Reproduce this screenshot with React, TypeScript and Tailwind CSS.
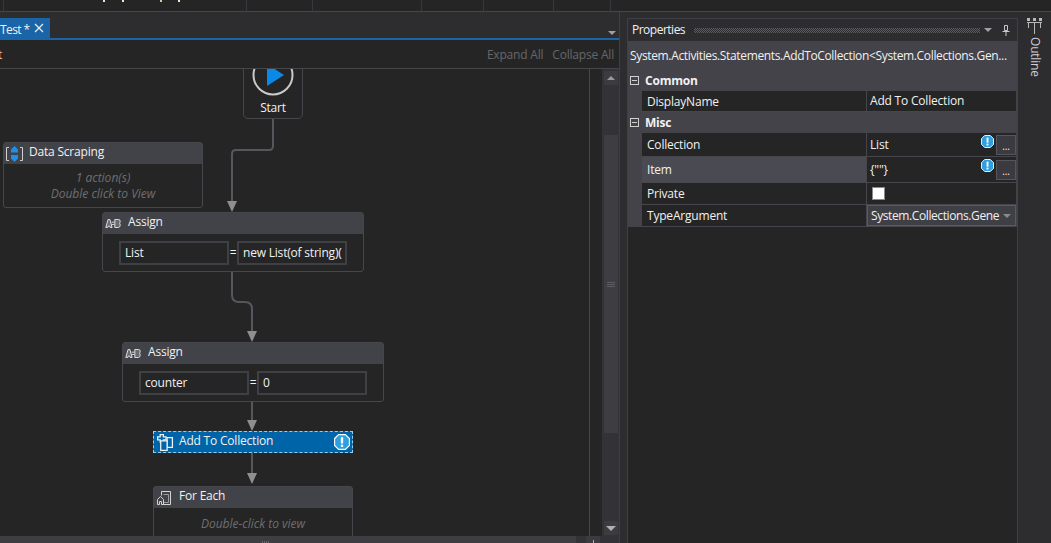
const FONT = "font-['Open_Sans','Noto_Sans',sans-serif] tracking-[-0.2px]";

function Arrow({ x, y }: { x: number; y: number }) {
  return (
    <svg className="absolute" style={{ left: x - 6, top: y }} width="12" height="11" viewBox="0 0 12 11">
      <path d="M1 0h10L6 11z" fill="#8f8f8f" />
    </svg>
  );
}

function Line({ d }: { d: string }) {
  return <path d={d} fill="none" stroke="#56565c" strokeWidth="2" />;
}

function AssignIcon() {
  return (
    <svg width="16" height="9" viewBox="0 0 17 10" fill="#6a6a70" stroke="#e0e0e0" strokeWidth="1.100">
      <path d="M.5 9.500 3 .5h2L7.500 9.500h-2L5 8H3L2.500 9.500z" />
      <path d="M7 3.500h3M7 6h3" fill="none" />
      <path d="M10.500 .5h4q2 0 2 2 0 1.500-1 2 1 .5 1 2.500t-2 2.500h-4z" />
    </svg>
  );
}

function Info({ size = 14 }: { size?: number }) {
  return (
    <svg width={size} height={size} viewBox="0 0 14 14">
      <path d="M4 .5h6L13.500 4v6L10 13.500H4L.5 10V4z" fill="#2f9fe0" stroke="#fff" />
      <rect x="6" y="2.800" width="2" height="5.500" fill="#fff" />
      <rect x="6" y="9.300" width="2" height="2" fill="#fff" />
    </svg>
  );
}

function Node({
  x, y, w, title, icon, children,
}: { x: number; y: number; w: number; title: string; icon: React.ReactNode; children: React.ReactNode }) {
  return (
    <div className="absolute border border-[#46464c] rounded-[3px] bg-[#252526]" style={{ left: x, top: y, width: w }}>
      <div className="h-[21px] bg-[#424249] flex items-center text-[12px] text-[#f1f1f1]">
        <div className="w-[25px] pl-[2px] flex justify-start">{icon}</div>
        <span className="pb-[3px]">{title}</span>
      </div>
      {children}
    </div>
  );
}

function Field({ text }: { text: string }) {
  return (
    <div className="w-[110px] h-[24px] border-2 border-[#3f3f46] flex items-center pl-1 text-[12px] text-[#f1f1f1] overflow-hidden whitespace-nowrap">
      {text}
    </div>
  );
}

function AssignBody({ left, right }: { left: string; right: string }) {
  return (
    <div className="h-[37px] flex items-center pl-[16px] pt-[1px] text-[12px] text-[#f1f1f1]">
      <Field text={left} />
      <span className="w-[8px] text-center">=</span>
      <Field text={right} />
    </div>
  );
}

function Canvas() {
  return (
    <div className="relative flex-1 min-h-0 overflow-hidden bg-[#252526]">
      <svg className="absolute left-0 top-0" width="589" height="467">
        <Line d="M273 49V77Q273 81 269 81H236Q232 81 232 85V133" />
        <Line d="M232 203V226Q232 233 239 233H245Q252 233 252 240V263" />
        <Line d="M252 333V352" />
        <Line d="M252 384V405" />
      </svg>
      <div className="absolute left-[589px] top-0 bottom-0 w-px bg-[#46464c]" />
      <div className="absolute left-[243px] top-[-20px] w-[60px] h-[70px] border border-[#46464c] rounded-[5px] flex flex-col items-center">
        <svg className="mt-[4px]" width="42" height="42" viewBox="0 0 42 42">
          <circle cx="21" cy="21" r="19.500" fill="none" stroke="#c9c9c9" strokeWidth="2" />
          <path d="M15 10 32 21 15 32z" fill="#0a8ae8" />
        </svg>
        <span className="text-[12px] leading-[16px] text-[#f1f1f1] mt-[4px]">Start</span>
      </div>

      <Node x={3} y={73} w={200} title="Data Scraping" icon={
        <svg width="17" height="16" viewBox="0 0 17 16">
          <path d="M3 1.500H.5V14.500H3M14 1.500H16.500V14.500H14" fill="none" stroke="#cfcfcf" />
          <path d="M5 3.500 8.500 0 12 3.500V6.500H5z" fill="#1e90e8" />
          <path d="M5 9h7v3.500L8.500 16 5 12.500z" fill="#1e90e8" />
        </svg>
      }>
        <div className="h-[43px] flex flex-col items-center justify-center text-[12px] leading-[16px] italic tracking-[0px] text-[#6f6f6f]">
          <span>1 action(s)</span>
          <span>Double click to View</span>
        </div>
      </Node>
      <Arrow x={232} y={132} />
      <Node x={102} y={143} w={262} title="Assign" icon={<AssignIcon />}>
        <AssignBody left="List" right="new List(of string)(" />
      </Node>
      <Arrow x={252} y={262} />
      <Node x={122} y={273} w={262} title="Assign" icon={<AssignIcon />}>
        <AssignBody left="counter" right="0" />
      </Node>
      <Arrow x={252} y={351} />
      <div className="absolute left-[153px] top-[362px] w-[200px] h-[22px] bg-[#0065a8] border border-dashed border-[#9ccbe8] flex items-center text-[12px] text-[#f1f1f1]">
        <div className="w-[25px] pl-[3px] flex justify-start">
          <svg width="17" height="17" viewBox="0 0 16 16" fill="#0065a8" stroke="#f0f0f0" strokeWidth="1.200">
            <path d="M9.500 3.500h5v9h-5z" />
            <path d="M3 .6h3v2h2.500v3H6v2H3v-2H.6v-3H3z" />
            <path d="M3.500 6.500h6v9h-6z" />
          </svg>
        </div>
        <span className="pb-[2px]">Add To Collection</span>
        <div className="ml-auto mr-[2px] flex"><Info size={16} /></div>
      </div>
      <Arrow x={252} y={404} />
      <Node x={153} y={417} w={200} title="For Each" icon={
        <svg width="16" height="16" viewBox="0 0 16 16" fill="none" stroke="#d4d4d4">
          <path d="M5.500 5.500v-4h9v13h-9" />
          <path d="M7.500 4.500h5v8h-5" stroke="#9a9a9a" />
          <path d="M3.500 14.500h-2v-5l3-3 3 3v5h-2v-3h-2z" fill="#424249" />
        </svg>
      }>
        <div className="h-[40px] flex items-center justify-center text-[12px] italic tracking-[0px] text-[#6f6f6f] pb-[9px]">Double-click to view</div>
      </Node>
    </div>
  );
}

function ScrollV() {
  return (
    <div className="w-[17px] bg-[#333337] flex flex-col items-center">
      <div className="mt-[2px] w-[14px] h-[14px] bg-[#3c3c40] flex items-center justify-center">
        <div className="w-0 h-0 border-x-[4px] border-x-transparent border-b-[4px] border-b-[#9a9a9a]" />
      </div>
      <div className="w-[14px] mt-[50px] h-[298px] bg-[#3e3e42] flex flex-col items-center justify-center gap-px">
        <div className="w-[8px] h-px bg-[#5c5c62]" />
        <div className="w-[8px] h-px bg-[#5c5c62]" />
        <div className="w-[8px] h-px bg-[#5c5c62]" />
      </div>
      <div className="mt-[88px] w-[14px] h-[14px] bg-[#3c3c40] flex items-center justify-center">
        <div className="w-0 h-0 border-x-[5px] border-x-transparent border-t-[5px] border-t-[#b0b0b0]" />
      </div>
    </div>
  );
}

function HBar() {
  return (
    <div className="h-[7px] shrink-0 bg-[#333337] flex">
      <div className="w-[576px] bg-[#3e3e42] flex justify-center">
        <div className="mt-[5px] ml-[-46px] flex gap-px">
          <div className="w-px h-[2px] bg-[#66666c]" />
          <div className="w-px h-[2px] bg-[#66666c]" />
          <div className="w-px h-[2px] bg-[#66666c]" />
          <div className="w-px h-[2px] bg-[#66666c]" />
        </div>
      </div>
      <div className="ml-[10px] w-[14px] bg-[#3c3c40] flex justify-center">
        <div className="w-px h-[3px] mt-[4px] bg-[#b0b0b0]" />
      </div>
    </div>
  );
}

function Row({ label, h, highlight, children }: { label: string; h: string; highlight?: boolean; children?: React.ReactNode }) {
  return (
    <div className={`flex ${h} ml-[14px] mr-[1px] text-[12px] border-b border-[#46464c]`}>
      <div className={`w-[224px] flex items-center pl-[5px] pt-[1px] text-[#f1f1f1] ${highlight ? "bg-[#4a4a52]" : "bg-[#252526]"}`}>{label}</div>
      <div className="w-[1px] bg-[#46464c]" />
      <div className="flex-1 bg-[#252526] flex items-center text-[#f1f1f1]">{children}</div>
    </div>
  );
}

function Section({ title }: { title: string }) {
  return (
    <div className="h-[21px] flex items-center text-[12px] font-bold text-[#f1f1f1]">
      <div className="ml-[2px] w-[9px] h-[9px] border border-[#d0d0d0] flex items-center justify-center">
        <div className="w-[5px] h-px bg-[#d0d0d0]" />
      </div>
      <span className="ml-[6px]">{title}</span>
    </div>
  );
}

function ExprCell({ text }: { text: string }) {
  return (
    <div className="flex-1 flex items-center h-full bg-[#252526]">
      <div className="w-[111px] pl-[3px] pt-[1px]">{text}</div>
      <div className="w-[18px] h-full flex justify-center pt-[2px]"><Info size={13} /></div>
      <div className="ml-auto w-[20px] h-[20px] bg-[#3a3a40] border border-[#55555b] text-center leading-[20px] text-[10px]">...</div>
    </div>
  );
}

function Properties() {
  return (
    <div className="w-[391px] h-full flex flex-col border border-[#3f3f46] border-b-0 bg-[#252526]">
      <div className="h-[22px] flex items-center bg-[#2d2d30] text-[12px] text-[#f1f1f1] shrink-0">
        <span className="ml-[4px] w-[62px] tracking-[-0.5px]">Properties</span>
        <div className="w-[286px] h-[5px] bg-[repeating-conic-gradient(#5c5c62_0_25%,transparent_0_50%)] bg-[length:2px_2px]" />
        <div className="ml-auto mr-[7px] flex items-center gap-[10px]">
          <div className="w-0 h-0 border-x-[4px] border-x-transparent border-t-[4px] border-t-[#a0a0a0]" />
          <svg width="8" height="11" viewBox="0 0 8 11" fill="none" stroke="#c8c8c8">
            <path d="M2.500 .5h3v5h-3zM.5 6.500h7M4 7v4" />
          </svg>
        </div>
      </div>
      <div className="flex-none bg-[#434349]">
        <div className="h-[29px] flex items-center pl-[2px] text-[12px] tracking-[-0.35px] text-[#f1f1f1] whitespace-nowrap">System.Activities.Statements.AddToCollection&lt;System.Collections.Gen...</div>
        <Section title="Common" />
        <Row label="DisplayName" h="h-[21px]"><span className="pl-[3px]">Add To Collection</span></Row>
        <Section title="Misc" />
        <Row label="Collection" h="h-[24px]"><ExprCell text="List" /></Row>
        <Row label="Item" h="h-[26px]" highlight><ExprCell text={'{""}'} /></Row>
        <Row label="Private" h="h-[22px]">
          <div className="ml-[5px] w-[13px] h-[13px] bg-white border border-[#8a8a8a]" />
        </Row>
        <Row label="TypeArgument" h="h-[22px]">
          <div className="w-full h-full border border-[#5a5a60] bg-[#3f3f46] flex items-center pl-[3px] pt-[1px] tracking-[-0.4px] whitespace-nowrap">
            <span>System.Collections.Gene</span>
            <div className="ml-auto mr-[4px] w-0 h-0 border-x-[4px] border-x-transparent border-t-[4px] border-t-[#8a8a8a]" />
          </div>
        </Row>
      </div>
      <div className="flex-1" />
    </div>
  );
}

function TopBar() {
  const Sep = ({ w }: { w: string }) => <div className={`${w} h-[11px] border-r border-[#38383c]`} />;
  const Dot = ({ c, ml }: { c: string; ml: string }) => <div className={`${ml} w-[2px] h-[2px] ${c}`} />;
  return (
    <div className="h-[12px] shrink-0 bg-[#252526] border-b border-[#45454a] flex">
      <Sep w="w-[4px]" />
      <Dot ml="ml-[99px]" c="bg-[#d8e8f0]" />
      <Dot ml="ml-[17px]" c="bg-[#f0e8d8]" />
      <Dot ml="ml-[36px]" c="bg-[#d8c8a8]" />
      <Dot ml="ml-[16px]" c="bg-[#f0e8d8]" />
      <Sep w="w-[67px]" />
      <Sep w="w-[66px]" />
      <Sep w="w-[109px]" />
      <Sep w="w-[62px]" />
      <Sep w="w-[70px]" />
      <Sep w="w-[57px]" />
    </div>
  );
}

export default function App() {
  return (
    <div className={`${FONT} w-[1051px] h-[543px] overflow-hidden bg-[#2d2d30] flex flex-col`}>
      <TopBar />
      <div className="flex flex-1 min-h-0">
        <div className="w-[620px] flex flex-col min-h-0 border-r border-[#3f3f46]">
          <div className="h-[26px] shrink-0 flex items-end relative">
            <div className="w-[50px] h-[20px] bg-[#1a65a8] text-[12px] text-[#f1f1f1] flex items-center overflow-hidden">
              <span className="whitespace-nowrap w-[34px] shrink-0 pt-[3px] tracking-[-0.6px]">Test *</span>
              <svg className="shrink-0" width="10" height="10" viewBox="0 0 10 10" stroke="#eaeaea" strokeWidth="1.300"><path d="M1 1l8 8M9 1l-8 8" /></svg>
            </div>
            <div className="absolute right-[3px] bottom-[3px] w-0 h-0 border-x-[4px] border-x-transparent border-t-[4px] border-t-[#a0a0a0]" />
          </div>
          <div className="h-[2px] bg-[#1a65a8] shrink-0" />
          <div className="h-[29px] shrink-0 bg-[#252526] border-b border-[#45454a] flex items-center text-[12px]">
            <span className="text-[#e8c49a] -ml-[2px] pt-[2px]">t</span>
            <span className="ml-auto text-[#65656b] pt-[2px]">Expand All</span>
            <span className="ml-[9px] mr-[5px] text-[#65656b] pt-[2px]">Collapse All</span>
          </div>
          <div className="flex flex-1 min-h-0">
            <div className="flex-1 flex flex-col min-h-0 min-w-0">
              <Canvas />
              <HBar />
            </div>
            <ScrollV />
          </div>
        </div>
        <div className="ml-[7px] h-full pt-[6px]">
          <Properties />
        </div>
        <div className="flex-1 flex flex-col items-center pt-[6px] text-[12px] text-[#d0d0d0]">
          <svg width="16" height="16" viewBox="0 0 16 16" fill="#b8b8b8">
            <rect x="0" y="0" width="3" height="3" /><rect x="6" y="0" width="3" height="3" /><rect x="12" y="0" width="3" height="3" />
            <rect x="0" y="4" width="15" height="1" />
            <rect x="1" y="5" width="1" height="5" /><rect x="7" y="5" width="1" height="11" /><rect x="13" y="5" width="1" height="5" />
          </svg>
          <span className="[writing-mode:vertical-rl] mt-[3px]">Outline</span>
        </div>
      </div>
    </div>
  );
}
